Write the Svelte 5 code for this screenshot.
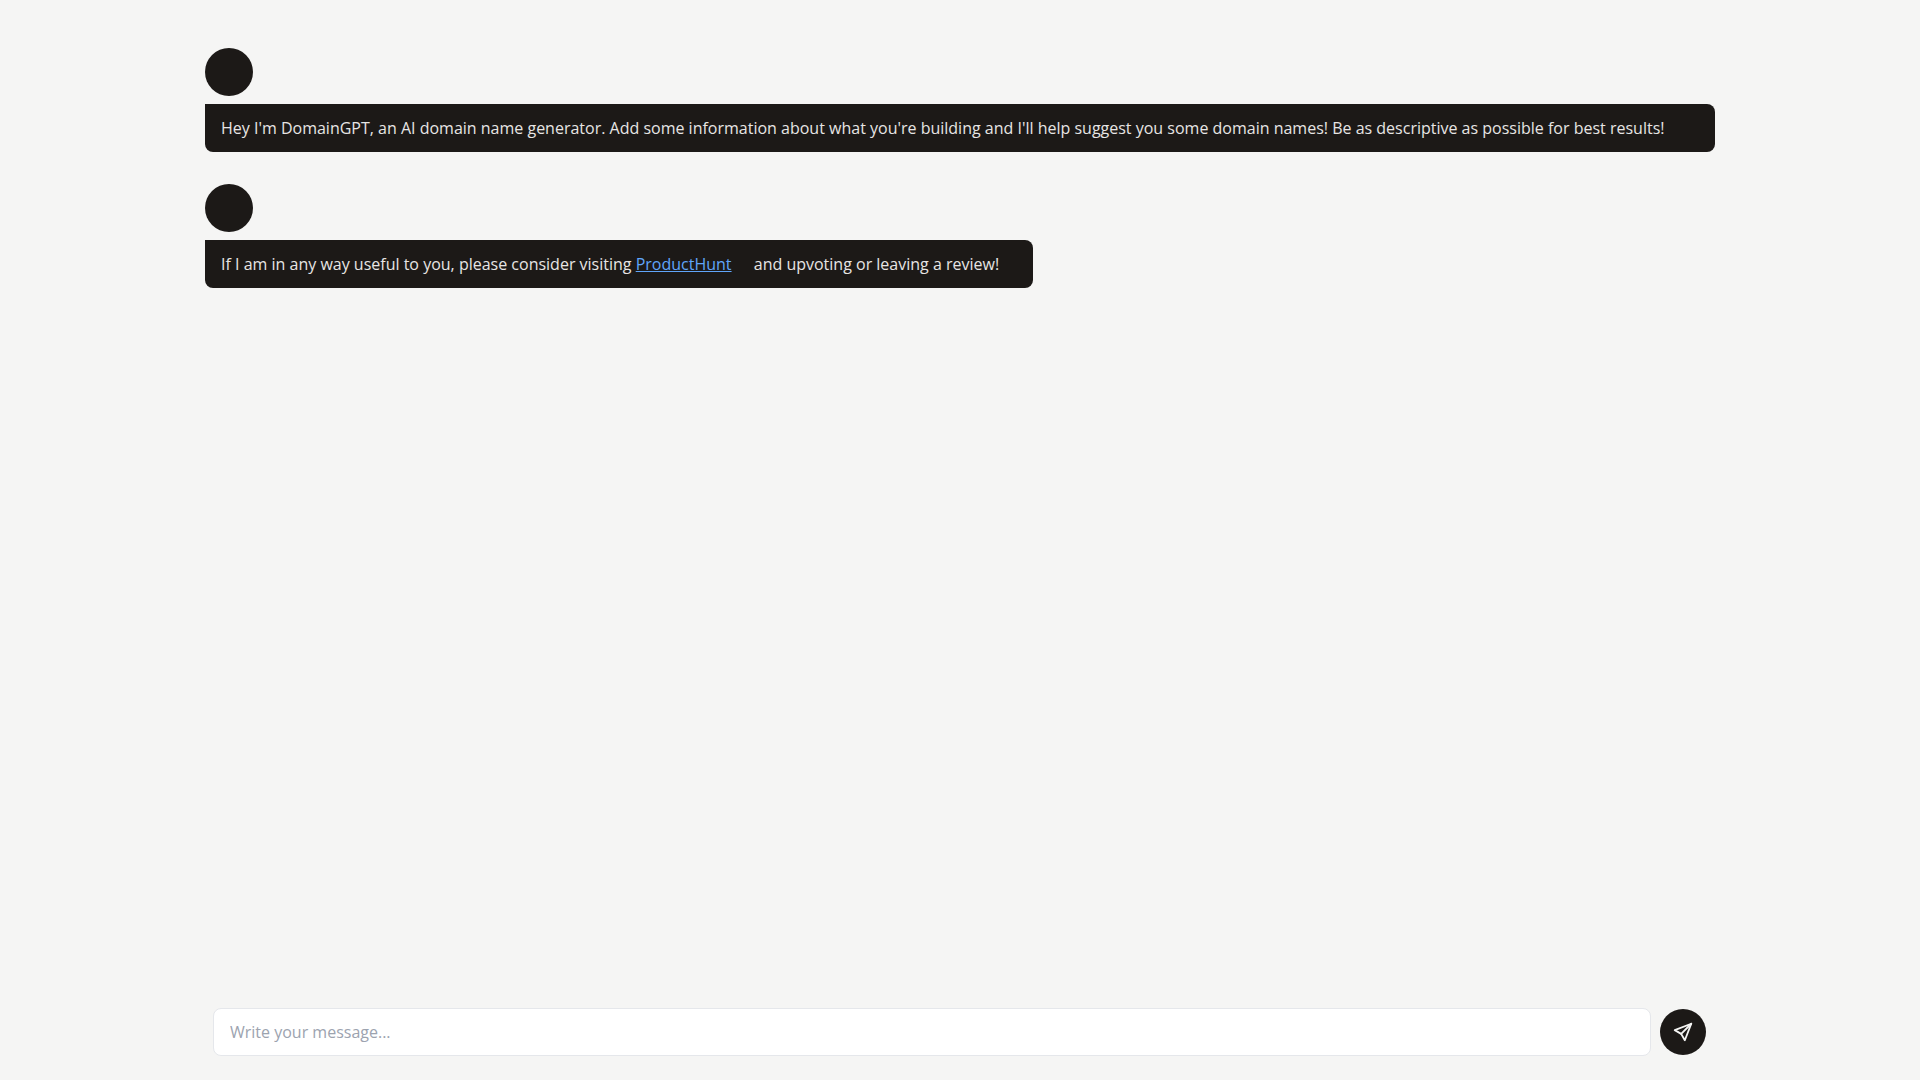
<script lang="ts">
  let message = "";

  function send() {
    message = "";
  }
</script>

<svelte:head>
  <title>DomainGPT</title>
</svelte:head>

<main class="chat">
  <section class="messages">
    <article class="message">
      <div class="avatar"></div>
      <p class="bubble full">
        Hey I'm DomainGPT, an AI domain name generator. Add some information about what you're building and I'll help suggest you some domain names! Be as descriptive as possible for best results!
      </p>
    </article>
    <article class="message">
      <div class="avatar"></div>
      <p class="bubble">
        If I am in any way useful to you, please consider visiting
        <a href="https://www.producthunt.com">ProductHunt</a><span class="spacer"></span>
        and upvoting or leaving a review!
      </p>
    </article>
  </section>

  <form class="composer" on:submit|preventDefault={send}>
    <input
      type="text"
      placeholder="Write your message..."
      aria-label="Message"
      bind:value={message}
    />
    <button type="submit" aria-label="Send">
      <svg viewBox="0 0 24 24" width="22" height="22" aria-hidden="true">
        <path d="M10 14L21 3" />
        <path d="M21 3L14 21L10 14L3 10Z" />
      </svg>
    </button>
  </form>
</main>

<style>
  :global(body) {
    margin: 0;
    background: #f5f5f4;
    font-family: "Open Sans", sans-serif;
    font-size: 16px;
    line-height: 24px;
  }

  .chat {
    box-sizing: border-box;
    display: flex;
    flex-direction: column;
    justify-content: space-between;
    max-width: 1510px;
    min-height: 100vh;
    margin: 0 auto;
    padding: 48px 0 24px;
  }

  .messages {
    display: flex;
    flex-direction: column;
    gap: 32px;
  }

  .message {
    display: flex;
    flex-direction: column;
    align-items: flex-start;
    gap: 8px;
  }

  .avatar {
    width: 48px;
    height: 48px;
    border-radius: 50%;
    background: #1c1917;
  }

  .bubble {
    margin: 0;
    padding: 12px 34px 12px 16px;
    border-radius: 0 8px 8px 8px;
    color: #e7e5e4;
    background: #1c1917;
  }

  .bubble.full {
    align-self: stretch;
    padding-right: 16px;
  }

  .bubble a {
    color: #60a5fa;
  }

  .spacer {
    display: inline-block;
    width: 18px;
  }

  .composer {
    display: flex;
    align-items: center;
    gap: 9px;
    padding: 0 9px 0 8px;
  }

  .composer input {
    box-sizing: border-box;
    flex: 1;
    min-width: 0;
    height: 48px;
    padding: 0 16px;
    border: 1px solid #e5e7eb;
    border-radius: 8px;
    background: #fff;
    color: #1c1917;
    font: inherit;
  }

  .composer input::placeholder {
    color: #9ca3af;
  }

  .composer button {
    display: flex;
    align-items: center;
    justify-content: center;
    width: 46px;
    height: 46px;
    padding: 0;
    border: 0;
    border-radius: 50%;
    background: #1c1917;
    cursor: pointer;
  }

  .composer svg {
    fill: none;
    stroke: #f5f5f4;
    stroke-width: 2;
    stroke-linecap: round;
    stroke-linejoin: round;
  }
</style>
